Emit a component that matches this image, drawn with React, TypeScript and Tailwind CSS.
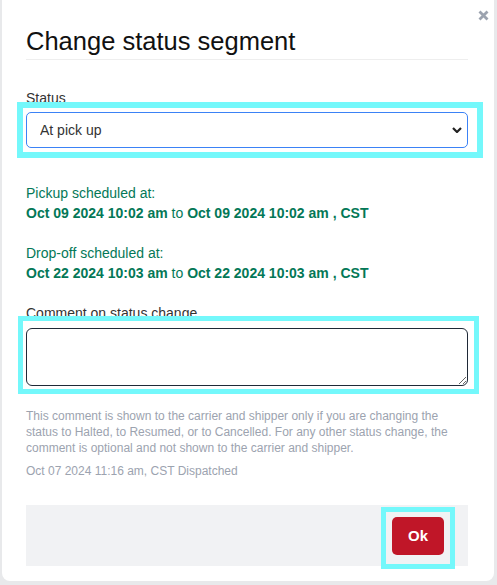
export default function App() {
  return (
    <div className="min-h-[585px] bg-[#e8e9eb] pl-[2px] font-['Liberation_Sans',Arial,sans-serif]">
      <div className="relative w-[492px] bg-white rounded-b-[8px] pl-[24px] pr-[26px] pt-[26px] pb-[15px]">
        {/* close */}
        <button className="absolute right-[5px] top-[10px] w-[11px] h-[11px]">
          <svg viewBox="0 0 11 11" className="w-[11px] h-[11px]">
            <path
              d="M1.5 1.5 L9.5 9.5 M9.5 1.5 L1.5 9.5"
              stroke="#9ca3af"
              strokeWidth="2.8"
              strokeLinecap="butt"
            />
          </svg>
        </button>

        <h1 className="text-[25.5px] leading-[30px] text-[#111]">
          Change status segment
        </h1>
        <div className="mt-[3px] h-px bg-[#eeeeee]" />

        <div className="mt-[28px] text-[14px] leading-[20px] text-[#333]">
          Status
        </div>
        <div className="relative mt-[4px]">
          <select className="w-full h-[36px] appearance-none rounded-[5px] border border-[#3b82f6] bg-white pl-[13px] text-[14px] text-[#333] outline-none">
            <option>At pick up</option>
          </select>
          <svg
            viewBox="0 0 10 6"
            className="pointer-events-none absolute right-[6px] top-[15px] w-[10px] h-[6px]"
          >
            <path d="M1 1 L5 5 L9 1" fill="none" stroke="#222" strokeWidth="2.2" />
          </svg>
        </div>

        <div className="mt-[35px] text-[14px] leading-[20px] text-[#047857]">
          <div>Pickup scheduled at:</div>
          <div>
            <b>Oct 09 2024 10:02 am</b> to <b>Oct 09 2024 10:02 am</b>{" "}
            <b>, CST</b>
          </div>
          <div className="mt-[20px]">Drop-off scheduled at:</div>
          <div>
            <b>Oct 22 2024 10:03 am</b> to <b>Oct 22 2024 10:03 am</b>{" "}
            <b>, CST</b>
          </div>
        </div>

        <div className="mt-[20px] text-[14px] leading-[20px] text-[#333]">
          Comment on status change
        </div>
        <textarea className="mt-[5px] block w-full h-[58px] rounded-[6px] border border-[#1f2937] bg-white" />

        <p className="mt-[22px] text-[12px] leading-[16px] text-[#9ca3af]">
          This comment is shown to the carrier and shipper only if you are
          changing the status to Halted, to Resumed, or to Cancelled. For any
          other status change, the comment is optional and not shown to the
          carrier and shipper.
        </p>
        <p className="mt-[7px] text-[12px] leading-[16px] text-[#9ca3af]">
          Oct 07 2024 11:16 am, CST Dispatched
        </p>

        <div className="mt-[26px] h-[61px] bg-[#f1f2f4] flex justify-end items-start pt-[12px] pr-[24px]">
          <button className="w-[52px] h-[38px] rounded-[5px] bg-[#c01628] text-white text-[15px] font-bold">
            Ok
          </button>
        </div>

        {/* highlight overlays */}
        <div className="pointer-events-none absolute left-[15px] top-[102px] w-[466px] h-[56px] border-[6px] border-[#74f8fb]" />
        <div className="pointer-events-none absolute left-[16px] top-[316px] w-[461px] h-[78px] border-[5px] border-[#74f8fb]" />
        <div className="pointer-events-none absolute left-[379px] top-[507px] w-[74px] h-[62px] border-[5px] border-[#74f8fb]" />
      </div>
    </div>
  );
}
